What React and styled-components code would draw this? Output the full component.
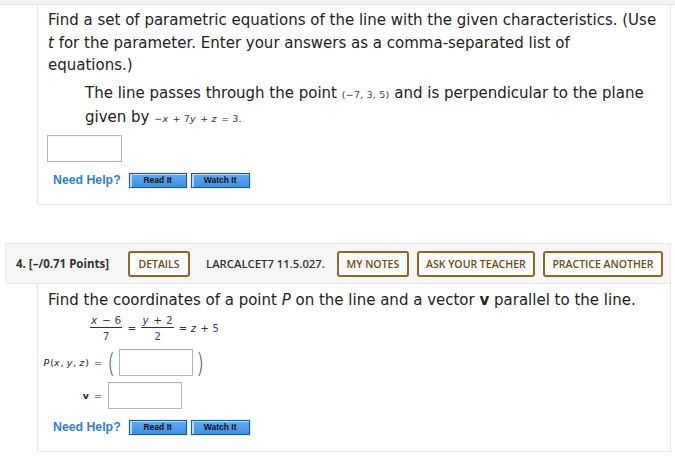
import React from 'react'
import styled, { createGlobalStyle } from 'styled-components'

const Global = createGlobalStyle`
  body {
    margin: 0;
    background: #fff;
    font-family: "DejaVu Sans", Verdana, sans-serif;
    color: #222;
  }
`

const Page = styled.div`
  width: 675px;
  height: 457px;
  overflow: hidden;
`

const TopStrip = styled.div`
  height: 4px;
  background: #f4f4f4;
  border-bottom: 1px solid #e4e4e4;
`

const Panel = styled.div`
  margin-left: 37px;
  width: 634px;
  border: 1px solid #e8e8e8;
  border-top: none;
  padding: ${({ pad }) => pad};
  box-sizing: border-box;
  height: ${({ h }) => h}px;
`

const Para = styled.p`
  margin: ${({ mt }) => mt || 0}px 0 0;
  font-size: 15px;
  line-height: 22.5px;
  padding-left: ${({ indent }) => indent || 0}px;
  padding-right: 8px;
`

const Math = styled.span`
  font-family: "DejaVu Sans", Verdana, sans-serif;
  font-size: ${({ fs }) => fs || 9.5}px;
  color: #333;
  letter-spacing: 0.2px;
  white-space: nowrap;
  i { font-style: italic; margin-right: 1px; }
  b { font-weight: normal; color: #3a3aa8; }
`

const AnswerBox = styled.div`
  width: ${({ w }) => w || 72}px;
  height: ${({ hh }) => hh || 23}px;
  border: 1px solid #b4b4b4;
  background: #fff;
  box-shadow: inset 0 1px 1px rgba(0,0,0,0.05);
`

const HelpRow = styled.div`
  display: flex;
  align-items: center;
  gap: 4px;
  margin-left: 5px;
  margin-top: ${({ mt }) => mt}px;
`

const NeedHelp = styled.span`
  font-family: "Liberation Sans", Arial, sans-serif;
  font-weight: bold;
  font-size: 12.3px;
  color: #2f7fd0;
  margin-right: 4px;
`

const HelpBtn = styled.span`
  display: inline-flex;
  align-items: center;
  justify-content: center;
  width: ${({ w }) => w}px;
  height: 15px;
  box-sizing: border-box;
  border: 1px solid #1c5c9e;
  box-shadow: inset 2px 1px 0 #b8dafa, 0 0 0 1px #e3eef9;
  background: linear-gradient(#62abef, #3f8fe2);
  font-family: "Liberation Sans", Arial, sans-serif;
  font-weight: bold;
  font-size: 8.5px;
  color: #111;
`

const Header = styled.div`
  margin: 38px 0 0 5px;
  width: 666px;
  height: 41px;
  box-sizing: border-box;
  background: #f6f6f6;
  border: 1px solid #e9e9e9;
  display: flex;
  align-items: center;
  padding-left: 10px;
  font-family: "Open Sans", sans-serif;
  font-size: 11.5px;
  color: #333;
`

const Points = styled.span`
  font-weight: 700;
  width: 112px;
  white-space: nowrap;
`

const Code = styled.span`
  font-weight: 600;
  font-size: 11.3px;
  margin: 0 12px 0 16px;
  white-space: nowrap;
`

const HdrBtn = styled.span`
  height: 26px;
  box-sizing: border-box;
  width: ${({ w }) => w}px;
  flex-shrink: 0;
  display: inline-flex;
  align-items: center;
  justify-content: center;
  border: 2px solid #8c6a2c;
  border-radius: 3px;
  background: #fafafa;
  color: #6b4f14;
  font-weight: 600;
  font-size: 10.5px;
  white-space: nowrap;
  margin-right: ${({ mr }) => mr || 0}px;
`

const Frac = styled.span`
  display: inline-flex;
  flex-direction: column;
  align-items: center;
  vertical-align: middle;
  padding: 0 2px;
  span { line-height: 12px; padding: 0 1px; }
  span:first-child { border-bottom: 1px solid #333; padding-bottom: 1px; }
  span:last-child { padding-top: 2px; }
`

const EqRow = styled.div`
  margin: 2px 0 0 40px;
  height: 29px;
  display: flex;
  align-items: center;
  gap: 3px;
`

const Grid = styled.div`
  display: grid;
  grid-template-columns: 60px auto;
  row-gap: 6px;
  align-items: center;
  margin: 6px 0 0 -6px;
`

const Label = styled.div`
  text-align: right;
  font-size: 9.5px;
  white-space: nowrap;
  i { font-style: italic; margin-right: 1px; }
  em { font-style: normal; margin-left: 5px; }
`

const Paren = styled.span`
  font-size: 27px;
  font-weight: 200;
  color: #444;
  line-height: 1;
  font-family: "DejaVu Sans", sans-serif;
  transform: scaleX(0.7);
  display: inline-block;
`

const Cell = styled.div`
  display: flex;
  align-items: center;
  gap: 2px;
  padding-left: ${({ pl }) => pl || 0}px;
`

const BoxWrap = styled.div`
  margin: 4px 0 0 -1px;
`

const Help = ({ mt }) => (
  <HelpRow mt={mt}>
    <NeedHelp>Need Help?</NeedHelp>
    <HelpBtn w={58}>Read It</HelpBtn>
    <HelpBtn w={59}>Watch It</HelpBtn>
  </HelpRow>
)

export default function App() {
  return (
    <Page>
      <Global />
      <TopStrip />
      <Panel pad="4px 0 0 10px" h={200}>
        <Para>
          Find a set of parametric equations of the line with the given characteristics. (Use{' '}
          <i>t</i> for the parameter. Enter your answers as a comma-separated list of
          <br />
          equations.)
        </Para>
        <Para indent={37} mt={5}>
          The line passes through the point{' '}
          <Math>(−<b>7</b>, <b>3</b>, <b>5</b>)</Math> and is perpendicular to the plane given by{' '}
          <Math>−<i>x</i> + <b>7</b><i>y</i> + <i>z</i> = <b>3</b>.</Math>
        </Para>
        <BoxWrap>
          <AnswerBox w={73} hh={25} />
        </BoxWrap>
        <Help mt={11} />
      </Panel>
      <Header>
        <Points>4. [–/0.71 Points]</Points>
        <HdrBtn w={62}>DETAILS</HdrBtn>
        <Code>LARCALCET7 11.5.027.</Code>
        <HdrBtn w={72} mr={8}>MY NOTES</HdrBtn>
        <HdrBtn w={118} mr={8}>ASK YOUR TEACHER</HdrBtn>
        <HdrBtn w={120}>PRACTICE ANOTHER</HdrBtn>
      </Header>
      <Panel pad="5px 0 0 10px" h={168}>
        <Para>
          Find the coordinates of a point <i>P</i> on the line and a vector <b>v</b> parallel to the line.
        </Para>
        <EqRow>
          <Math fs={10.5}>
            <Frac>
              <span><i>x</i> − <b>6</b></span>
              <span><b>7</b></span>
            </Frac>
          </Math>
          <Math fs={10.5}>=</Math>
          <Math fs={10.5}>
            <Frac>
              <span><i>y</i> + <b>2</b></span>
              <span><b>2</b></span>
            </Frac>
          </Math>
          <Math fs={10}>= <i>z</i> + <b>5</b></Math>
        </EqRow>
        <Grid>
          <Label><i>P</i>(<i>x</i>, <i>y</i>, <i>z</i>)<em>=</em></Label>
          <Cell pl={4}>
            <Paren>(</Paren>
            <AnswerBox w={72} hh={25} />
            <Paren>)</Paren>
          </Cell>
          <Label><b>v</b><em>=</em></Label>
          <Cell pl={6}>
            <AnswerBox w={72} hh={25} />
          </Cell>
        </Grid>
        <Help mt={11} />
      </Panel>
    </Page>
  )
}
